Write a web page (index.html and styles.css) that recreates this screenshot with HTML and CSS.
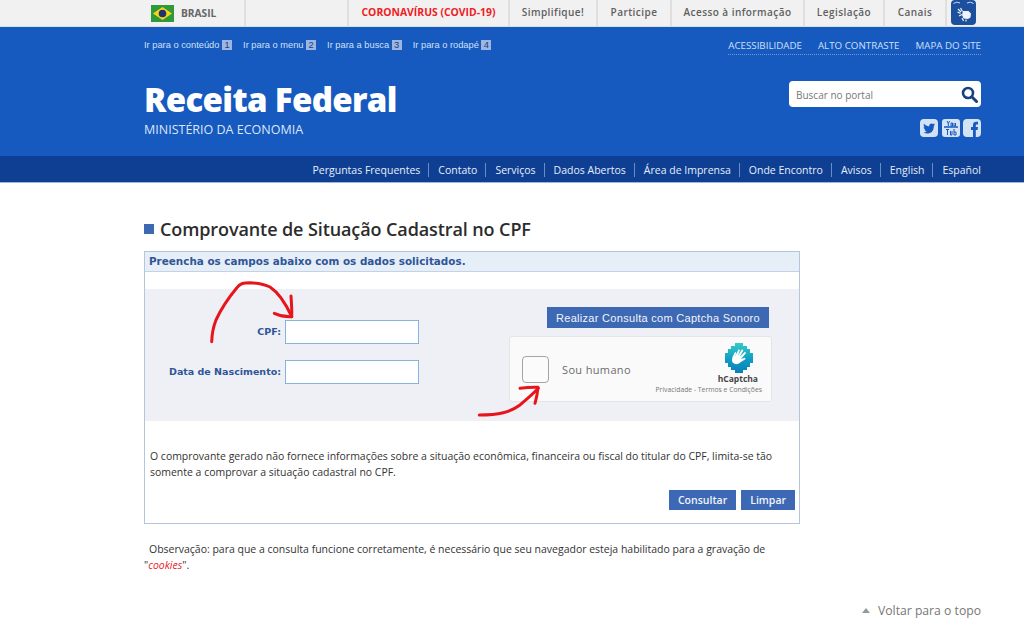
FILE: index.html
```html
<!DOCTYPE html>
<html lang="pt-BR">

<head>
    <meta charset="utf-8">
    <title>Receita Federal</title>
    <link rel="stylesheet" href="styles.css">
</head>

<body>
    <div class="topbar">
        <div class="top-brasil">
            <svg class="flag" width="23" height="17" viewBox="0 0 23 17">
                <rect width="23" height="17" fill="#2f9a3c" />
                <polygon points="11.5,2 21,8.5 11.5,15 2,8.5" fill="#f7d417" />
                <circle cx="11.5" cy="8.5" r="3.8" fill="#23336f" />
            </svg>
            <span>BRASIL</span>
        </div>
        <div class="top-spacer"></div>
        <a class="top-covid">CORONAVÍRUS (COVID-19)</a>
        <a class="top-link w-simplifique">Simplifique!</a>
        <a class="top-link w-participe">Participe</a>
        <a class="top-link w-acesso">Acesso à informação</a>
        <a class="top-link w-legislacao">Legislação</a>
        <a class="top-link w-canais">Canais</a>
        <div class="vlibras">
            <svg width="25" height="25" viewBox="0 0 25 25">
                <rect width="25" height="25" rx="4" fill="#1d4f9f" />
                <path d="M2.500 3.500q3-2.500 6.500-.5M16 3q3.500-2 6.500.5" fill="none" stroke="#cfdcf0" stroke-width="1" />
                <path d="M12 11h5.500l2.500 2.500-.5 4-2.500 1.500-4.500-.5-1.500-3.500z" fill="#eef3fa" />
                <path d="M7 9l3 3M6.500 12l3 1.500M9.500 8l2 3.500M8 16l3-1.500M11 18l1.500 3M15 19.500v2" stroke="#eef3fa" stroke-width="1.200" fill="none" />
            </svg>
        </div>
    </div>

    <header class="header">
        <div class="header-top">
            <ul class="skip-links">
                <li>Ir para o conteúdo <b>1</b></li>
                <li>Ir para o menu <b>2</b></li>
                <li>Ir para a busca <b>3</b></li>
                <li>Ir para o rodapé <b>4</b></li>
            </ul>
            <ul class="access-links">
                <li>ACESSIBILIDADE</li>
                <li>ALTO CONTRASTE</li>
                <li>MAPA DO SITE</li>
            </ul>
        </div>
        <div class="header-main">
            <div class="logo">
                <div class="logo-title">Receita Federal</div>
                <div class="logo-sub">MINISTÉRIO DA ECONOMIA</div>
            </div>
            <div class="header-tools">
                <div class="search">
                    <span>Buscar no portal</span>
                    <svg width="17" height="17" viewBox="0 0 17 17">
                        <circle cx="7" cy="7" r="5" fill="none" stroke="#17427f" stroke-width="2.6" />
                        <path d="M10.8 10.8L15.5 15.5" stroke="#17427f" stroke-width="3" stroke-linecap="round" />
                    </svg>
                </div>
                <div class="social">
                    <svg width="18" height="18" viewBox="0 0 18 18">
                        <rect width="18" height="18" rx="4" fill="#d3e2f5" />
                        <path d="M15 5.3q-.8.4-1.500.5.800-.5 1.100-1.300-.8.400-1.600.600C11.700 3.700 9 4.700 9.100 7.400 7 7.300 5.200 6.300 4 4.800c-.7 1.200-.3 2.700.8 3.500q-.6 0-1.200-.3c0 1.300.9 2.400 2.100 2.600q-.6.200-1.100.1c.3 1 1.300 1.800 2.400 1.800-1.100.9-2.400 1.200-3.700 1.100C8.500 16 14 13.800 13.800 7q.7-.7 1.200-1.700z" fill="#1659bf" />
                    </svg>
                    <svg width="18" height="18" viewBox="0 0 18 18">
                        <rect width="18" height="18" rx="3" fill="#d3e2f5" />
                        <path d="M2 8h14" stroke="#1659bf" stroke-width="1.500" />
                        <path d="M5 2l1.300 2.500L7.600 2M6.300 4.500V7M9 4h1.500v3H9zM12 4v3h1.500V4M4 10.500h3M5.500 10.500V16M8.500 12v4h1.500v-4M12 10v6h2v-3h-2" fill="none" stroke="#1659bf" stroke-width="1" />
                    </svg>
                    <svg width="18" height="18" viewBox="0 0 18 18">
                        <rect width="18" height="18" rx="4" fill="#d3e2f5" />
                        <path d="M10 18v-7H8V8h2V6c0-2.200 1.300-3.300 3.200-3.300H15v2.800h-1.200c-.8 0-1 .4-1 1.100V8H15l-.4 3h-1.800v7z" fill="#1659bf" />
                    </svg>
                </div>
            </div>
        </div>
        <nav class="nav">
            <a>Perguntas Frequentes</a>
            <a>Contato</a>
            <a>Serviços</a>
            <a>Dados Abertos</a>
            <a>Área de Imprensa</a>
            <a>Onde Encontro</a>
            <a>Avisos</a>
            <a>English</a>
            <a>Español</a>
        </nav>
    </header>

    <main class="content">
        <h1 class="page-title">Comprovante de Situação Cadastral no CPF</h1>

        <form class="form-box">
            <div class="form-legend">Preencha os campos abaixo com os dados solicitados.</div>
            <div class="form-panel">
                <div class="fields">
                    <div class="field">
                        <label>CPF:</label>
                        <input type="text">
                    </div>
                    <div class="field">
                        <label>Data de Nascimento:</label>
                        <input type="text">
                    </div>
                </div>
                <div class="captcha-col">
                    <button type="button" class="btn-sound">Realizar Consulta com Captcha Sonoro</button>
                    <div class="captcha">
                        <span class="captcha-check"></span>
                        <span class="captcha-label">Sou humano</span>
                        <div class="captcha-brand">
                            <svg class="captcha-logo" width="28" height="30" viewBox="0 0 28 30" shape-rendering="crispEdges">
                                <defs>
                                    <linearGradient id="hc" x1="0" y1="0" x2="0" y2="1">
                                        <stop offset="0" stop-color="#35cdc4" />
                                        <stop offset="0.55" stop-color="#0f9cc4" />
                                        <stop offset="1" stop-color="#0a7fb8" />
                                    </linearGradient>
                                </defs>
                                <path d="M10 0h8v3h4v3h3v4h3v10h-3v4h-3v3h-4v3h-8v-3H6v-3H3v-4H0V10h3V6h3V3h4z" fill="url(#hc)" />
                                <path d="M7 15l3-6 1.300.8-1.300 4 3.500-7.500 1.500.8-2.300 6 4.300-6.800 1.400 1-3.500 6.500 5-5 1.200 1.200-5 6 3.800-1.300.8 1.400-5.500 3.500c-2.300 1.800-4.500 2.200-6.500.7-2.200-1.500-2-3.400-1.200-5.600z" fill="#fff" shape-rendering="auto" />
                            </svg>
                            <strong>hCaptcha</strong>
                            <small>Privacidade - Termos e Condições</small>
                        </div>
                    </div>
                </div>
            </div>
            <p class="form-note">O comprovante gerado não fornece informações sobre a situação econômica, financeira ou fiscal do titular do CPF, limita-se tão somente a comprovar a situação cadastral no CPF.</p>
            <div class="form-actions">
                <button type="button" class="btn">Consultar</button>
                <button type="button" class="btn">Limpar</button>
            </div>
        </form>

        <p class="obs"><span class="obs-first">Observação: para que a consulta funcione corretamente, é necessário que seu navegador esteja habilitado para a gravação de</span><br>"<em>cookies</em>".</p>
    </main>

    <div class="back-top"><span class="back-arrow"></span>Voltar para o topo</div>

    <!-- setas desenhadas a mao por cima da pagina -->
    <svg class="scribbles" width="1024" height="637" viewBox="0 0 1024 637">
        <path d="M211.700 341.700C212 333 214 325 216 320C222 307 230 296 236.700 288C240 283 244 282.700 250 282.700C258 283 265 284.500 270 287C279 293 286 304 291.700 316.700" />
        <path d="M291 296C291.500 303 292 310 291.700 316.700C285 317 279 315.500 274.300 313.300" />
        <path d="M479.300 415C488 415 496 414.500 503.300 412.700C510 411 516 408 520 405C527 399 533 394 538.300 388.300" />
        <path d="M520 388.300C526 387.500 532 387 538 387.300C537.500 393 536.500 398 535 403.300" />
    </svg>
</body>

</html>
```

FILE: styles.css
```css
* {
    box-sizing: border-box;
}

html,
body {
    height: 637px;
    overflow: hidden;
}

body {
    margin: 0;
    font-family: "Open Sans", Arial, sans-serif;
    font-size: 11px;
    color: #333;
    background: #fff;
}

ul {
    margin: 0;
    padding: 0;
    list-style: none;
}

/* barra do governo */
.topbar {
    display: flex;
    height: 27px;
    padding-left: 144px;
    background: #f1f1f1;
    border-bottom: 1px solid #dfdfdf;
    font-weight: 600;
    line-height: 24px;
    color: #606060;
}

.topbar > * {
    border-right: 2px solid #dfdfdf;
}

.top-brasil {
    display: flex;
    align-items: center;
    gap: 7px;
    width: 102px;
    padding-left: 7px;
    font-size: 10.200px;
    font-weight: 700;
    color: #666;
}

.top-spacer {
    width: 103px;
}

.top-covid {
    width: 161px;
    text-align: center;
    font-size: 10.400px;
    font-weight: 700;
    color: #f01c24;
}

.top-link {
    text-align: center;
    font-size: 10px;
    letter-spacing: 0.45px;
}

.w-simplifique {
    width: 88px;
}

.w-participe {
    width: 74px;
}

.w-acesso {
    width: 133px;
}

.w-legislacao {
    width: 80px;
}

.w-canais {
    width: 62px;
}

.topbar > .vlibras {
    border: 0;
    padding-left: 4px;
}

/* cabecalho azul */
.header {
    height: 156px;
    background: #1659bf;
    color: #fff;
}

.header-top {
    display: flex;
    justify-content: space-between;
    align-items: flex-start;
    padding: 12px 43px 0 144px;
}

.skip-links {
    display: flex;
    gap: 11px;
    font-family: "Liberation Sans", Arial, sans-serif;
    font-size: 9.300px;
    line-height: 12px;
    color: #cfe0f7;
}

.skip-links b {
    display: inline-block;
    width: 10px;
    height: 10px;
    background: #9db5e0;
    color: #17427f;
    font-weight: 400;
    line-height: 10px;
    text-align: center;
}

.access-links {
    display: flex;
    gap: 16px;
    padding-bottom: 1px;
    border-bottom: 1px dotted #6f9ad8;
    font-size: 9.750px;
    line-height: 14px;
    color: #cfe0f7;
}

.header-main {
    display: flex;
    justify-content: space-between;
    height: 101px;
    padding: 19px 43px 0 144px;
}

.logo-title {
    padding-top: 7px;
    font-size: 33px;
    font-weight: 800;
    line-height: 38px;
    letter-spacing: -0.65px;
    color: #fff;
}

.logo-sub {
    margin-top: 4px;
    font-size: 12.500px;
    line-height: 14px;
    color: #dbe7f8;
}

.header-tools {
    display: flex;
    flex-direction: column;
    align-items: flex-end;
}

.search {
    display: flex;
    justify-content: space-between;
    align-items: center;
    width: 192px;
    height: 26px;
    margin-top: 7px;
    padding: 0 3px 0 7px;
    background: #fff;
    border-radius: 4px;
    font-size: 10px;
    color: #777;
}

.search span {
    padding-top: 2px;
}

.social {
    display: flex;
    gap: 3.500px;
    margin-top: 12px;
}

.nav {
    display: flex;
    justify-content: flex-end;
    height: 27px;
    padding: 7px 43px 0 0;
    background: #0f3f93;
    border-bottom: 1px solid #9db5e0;
    font-size: 10.500px;
    line-height: 14px;
    color: #e6eefa;
}

.nav a {
    height: 14px;
    padding: 0 8px 0 9px;
    border-right: 1px solid #6a8cc6;
}

.nav a:last-child {
    padding-right: 0;
    border-right: 0;
}

/* conteudo */
.content {
    width: 656px;
    margin-left: 144px;
}

.page-title {
    display: flex;
    align-items: center;
    height: 26px;
    margin: 33px 0 0;
    font-size: 18px;
    font-weight: 600;
    letter-spacing: -0.1px;
    color: #2c2c2c;
}

.page-title::before {
    content: "";
    width: 10px;
    height: 10px;
    margin-right: 6px;
    background: #3d68b3;
}

.form-box {
    height: 273px;
    margin-top: 9px;
    border: 1px solid #b4c6dd;
}

.form-legend {
    height: 20px;
    padding-left: 4px;
    background: #e6eef7;
    border-bottom: 1px solid #c3d2e6;
    font-family: "DejaVu Sans", Verdana, sans-serif;
    font-size: 10.400px;
    font-weight: 700;
    line-height: 19px;
    color: #2f5597;
}

.form-panel {
    display: flex;
    justify-content: space-between;
    height: 132px;
    margin-top: 17px;
    padding: 18px 30px 0 0;
    background: #eef0f5;
}

.fields {
    display: flex;
    flex-direction: column;
    gap: 16px;
    padding-top: 13px;
}

.field {
    display: flex;
    align-items: center;
    gap: 4px;
}

.field label {
    width: 136px;
    padding-bottom: 2px;
    text-align: right;
    font-family: "DejaVu Sans", Verdana, sans-serif;
    font-size: 9.500px;
    font-weight: 700;
    color: #2f5597;
}

.field input {
    width: 134px;
    height: 24px;
    border: 1px solid #85b3df;
    background: #fff;
}

.captcha-col {
    display: flex;
    flex-direction: column;
    align-items: flex-end;
    gap: 8px;
}

.btn-sound,
.btn {
    border: 0;
    background: #3d68b3;
    color: #f1f5fb;
}

.btn-sound {
    width: 222px;
    height: 21px;
    padding: 0;
    font-family: "Liberation Sans", Arial, sans-serif;
    font-size: 11px;
    letter-spacing: 0.3px;
}

.captcha {
    display: flex;
    align-items: center;
    width: 263px;
    height: 66px;
    margin-right: -3px;
    padding: 0 9px 0 12px;
    background: #fafafa;
    border: 1px solid #e3e5e8;
    border-radius: 3px;
}

.captcha-check {
    width: 27px;
    height: 27px;
    background: #fbfbfb;
    border: 1px solid #a4a4a4;
    border-radius: 4px;
}

.captcha-label {
    margin-left: 13px;
    font-size: 11px;
    letter-spacing: 0.35px;
    color: #6c6c6c;
}

.captcha-brand {
    display: flex;
    flex-direction: column;
    align-items: flex-end;
    align-self: flex-start;
    margin-left: auto;
    padding-top: 6px;
    line-height: 10px;
}

.captcha-logo {
    margin-right: 9px;
}

.captcha-brand strong {
    margin-top: 1px;
    margin-right: 4px;
    font-size: 8.500px;
    color: #444;
}

.captcha-brand small {
    margin-top: 1px;
    font-size: 6.800px;
    color: #777;
    white-space: nowrap;
}

.form-note {
    margin: 27px 0 0;
    padding: 0 5px;
    font-size: 10.475px;
    line-height: 16px;
    color: #333;
}

.form-actions {
    display: flex;
    justify-content: flex-end;
    gap: 5px;
    margin-top: 10px;
    padding-right: 4px;
}

.btn {
    height: 20px;
    padding: 0 9px;
    font-family: "Open Sans", Arial, sans-serif;
    font-size: 10.500px;
    font-weight: 600;
}

.obs {
    margin: 17px 0 0;
    font-size: 10.490px;
    line-height: 16px;
    color: #333;
}

.obs-first {
    padding-left: 5px;
}

.obs em {
    color: #e8212a;
}

.back-top {
    display: flex;
    justify-content: flex-end;
    align-items: center;
    margin-top: 29px;
    padding-right: 43px;
    font-size: 12.200px;
    color: #777;
}

.back-arrow {
    width: 0;
    height: 0;
    margin-right: 8px;
    border: 4px solid transparent;
    border-top: 0;
    border-bottom: 5px solid #999;
}

.scribbles {
    position: absolute;
    top: 0;
    left: 0;
    fill: none;
    stroke: #e8141c;
    stroke-width: 3;
    stroke-linecap: round;
    stroke-linejoin: round;
    pointer-events: none;
}
```
